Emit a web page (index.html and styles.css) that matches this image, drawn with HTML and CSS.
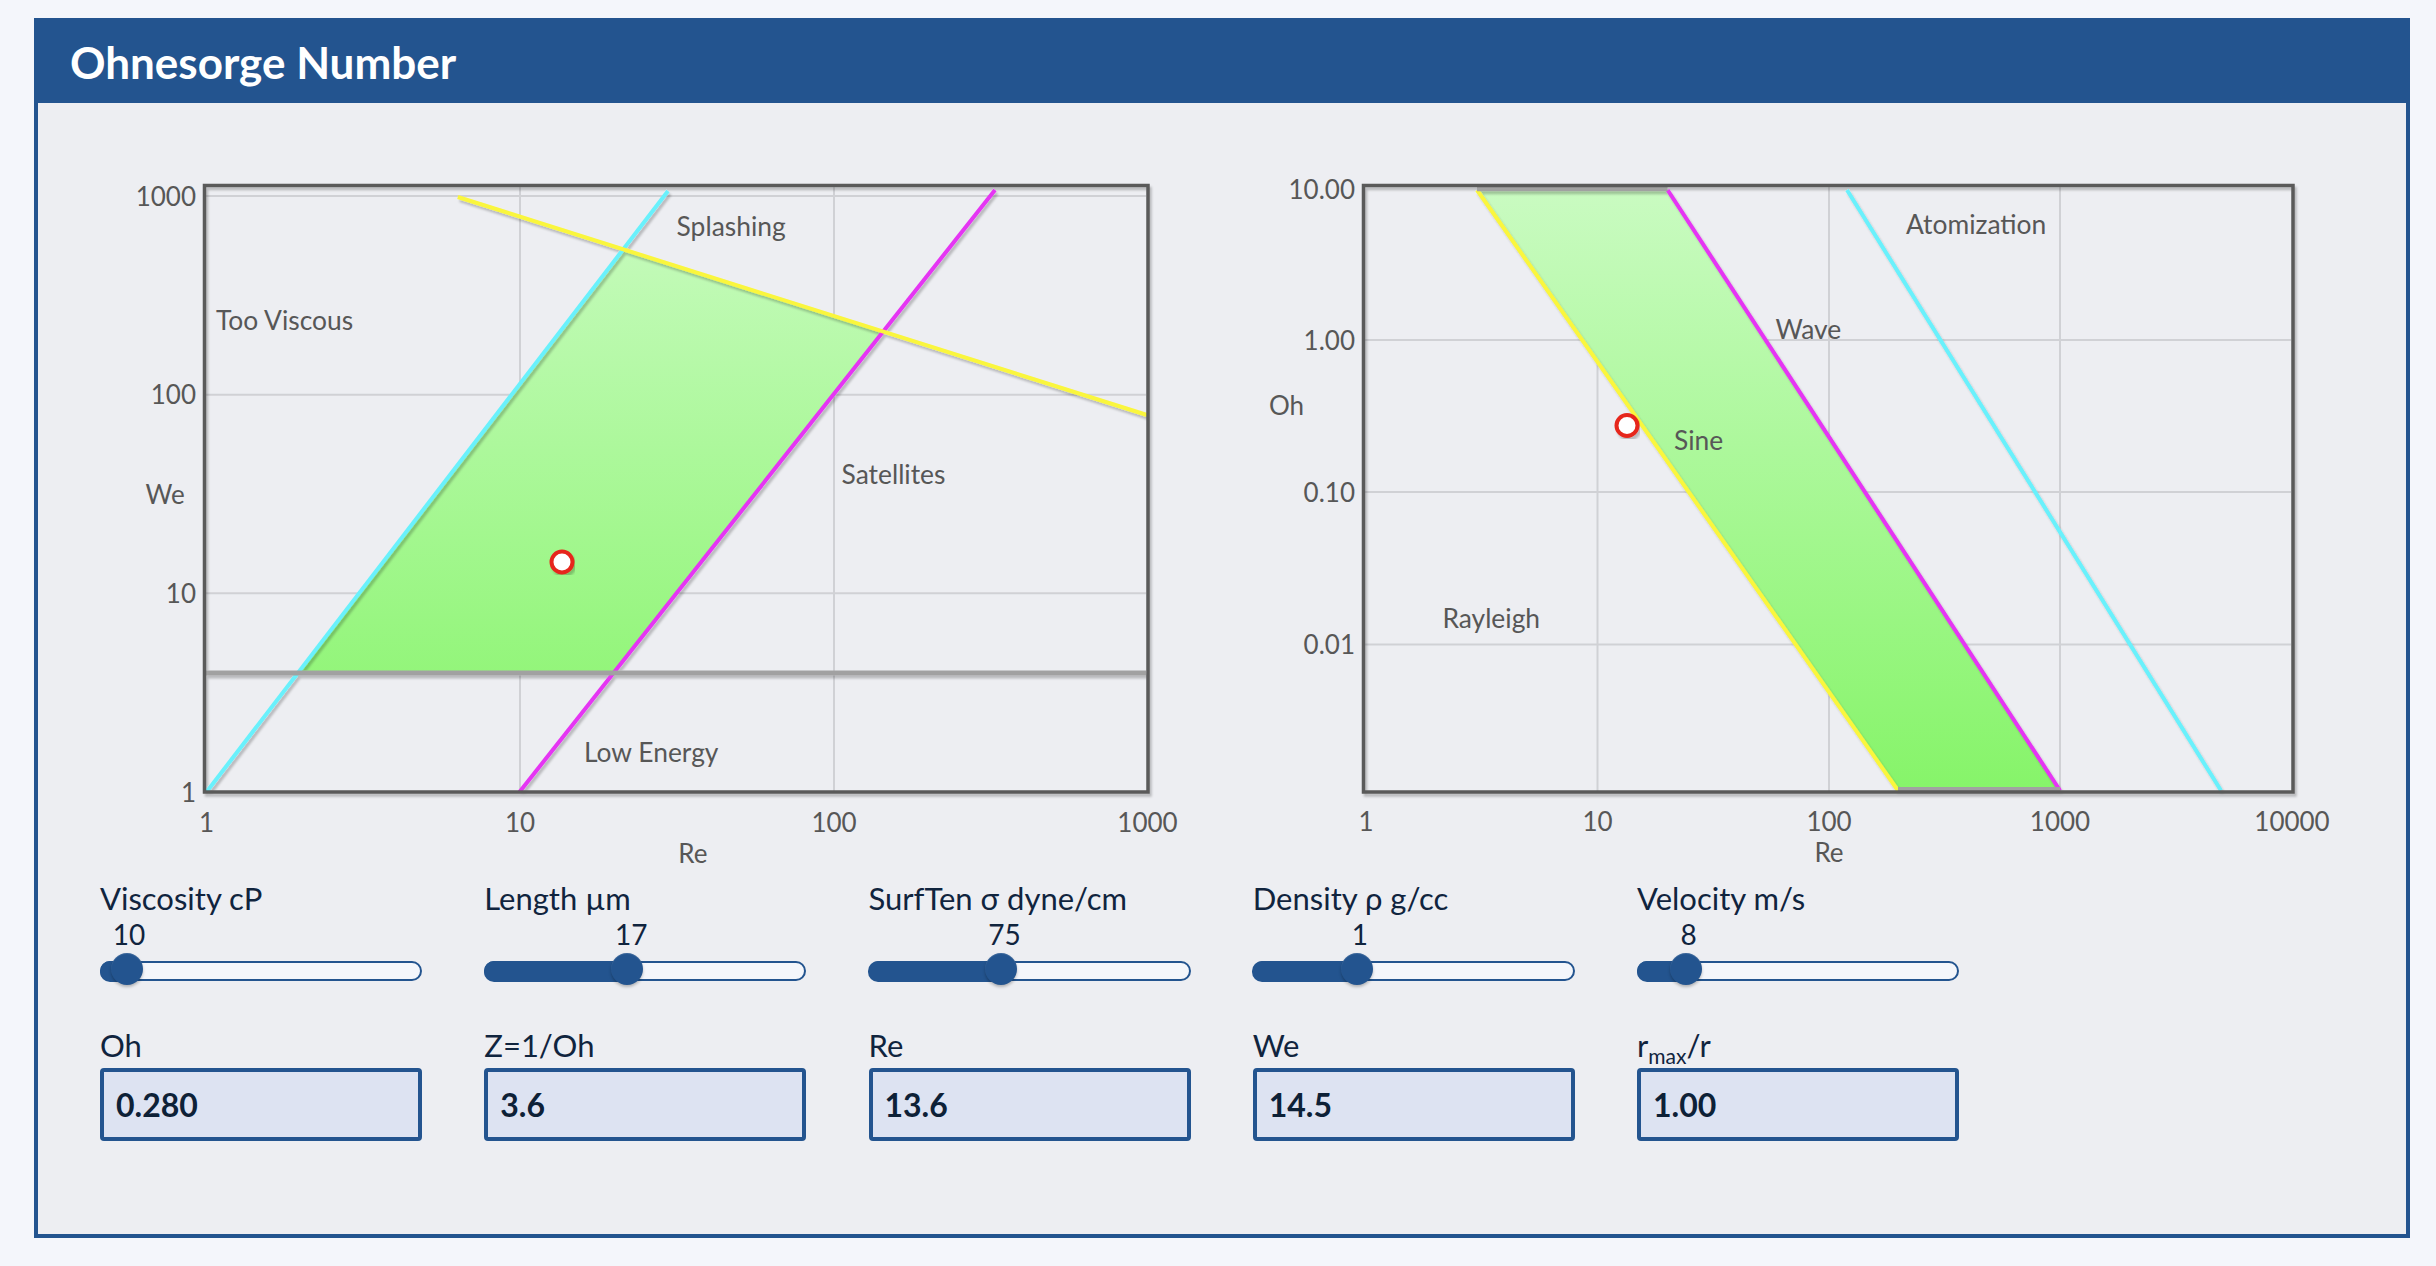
FILE: index.html
```html
<!DOCTYPE html>
<html lang="en">
<head>
<meta charset="utf-8">
<title>Ohnesorge Number</title>
<link rel="stylesheet" href="styles.css">
</head>
<body>
<section class="panel">
  <header class="panel-header">
    <h1 class="panel-title">Ohnesorge Number</h1>
  </header>
  <div class="panel-body">
    <div class="charts">
      <!-- Weber vs Reynolds regime map -->
      <svg class="chart chart-we" width="1100" height="730" viewBox="0 0 1100 730">
        <defs>
          <linearGradient id="band-a" gradientUnits="userSpaceOnUse" x1="0" y1="34" x2="0" y2="642">
            <stop offset="0" stop-color="#cafbc2"/>
            <stop offset="1" stop-color="#86f469"/>
          </linearGradient>
          <filter id="shade-a" x="-10%" y="-10%" width="120%" height="120%">
            <feDropShadow dx="2" dy="3" stdDeviation="1.2" flood-color="#000" flood-opacity="0.22"/>
          </filter>
        </defs>
        <g class="grid">
          <line x1="106" y1="46" x2="1046" y2="46"/>
          <line x1="106" y1="244.7" x2="1046" y2="244.7"/>
          <line x1="106" y1="443.3" x2="1046" y2="443.3"/>
          <line x1="420" y1="37" x2="420" y2="641"/>
          <line x1="734" y1="37" x2="734" y2="641"/>
        </g>
        <polygon class="band" fill="url(#band-a)" points="197.9,523 513.5,523 783.2,181.5 523.2,99.3"/>
        <g filter="url(#shade-a)">
          <line class="ln ln-cyan" x1="106.5" y1="642" x2="568" y2="41"/>
          <line class="ln ln-magenta" x1="419.5" y1="642" x2="895" y2="40"/>
          <line class="ln ln-yellow" x1="357.8" y1="47" x2="1047" y2="265"/>
          <line class="ln ln-gray" x1="106" y1="523" x2="1046" y2="523"/>
          <rect class="frame" x="104.5" y="35.5" width="943.5" height="606.5"/>
        </g>
        <circle class="marker" cx="462" cy="412" r="10.5" filter="url(#shade-a)"/>
        <g class="region-label">
          <text x="116" y="180">Too Viscous</text>
          <text x="576.6" y="86.3">Splashing</text>
          <text x="741.5" y="334">Satellites</text>
          <text x="484" y="612">Low Energy</text>
        </g>
        <g class="axis-label">
          <text x="45.6" y="353.5">We</text>
          <text x="592.8" y="713" text-anchor="middle">Re</text>
        </g>
        <g class="tick tick-y">
          <text x="96" y="55.5">1000</text>
          <text x="96" y="254.2">100</text>
          <text x="96" y="452.8">10</text>
          <text x="96" y="651.5">1</text>
        </g>
        <g class="tick tick-x">
          <text x="106.5" y="682">1</text>
          <text x="420" y="682">10</text>
          <text x="734" y="682">100</text>
          <text x="1047.5" y="682">1000</text>
        </g>
      </svg>

      <!-- Ohnesorge vs Reynolds jet breakup map -->
      <svg class="chart chart-oh" width="1150" height="730" viewBox="0 0 1150 730">
        <defs>
          <linearGradient id="band-b" gradientUnits="userSpaceOnUse" x1="0" y1="34" x2="0" y2="642">
            <stop offset="0" stop-color="#cafbc2"/>
            <stop offset="1" stop-color="#86f469"/>
          </linearGradient>
          <filter id="shade-b" x="-10%" y="-10%" width="120%" height="120%">
            <feDropShadow dx="2" dy="3" stdDeviation="1.2" flood-color="#000" flood-opacity="0.22"/>
          </filter>
        </defs>
        <g class="grid">
          <line x1="125" y1="190" x2="1051" y2="190"/>
          <line x1="125" y1="342" x2="1051" y2="342"/>
          <line x1="125" y1="494.5" x2="1051" y2="494.5"/>
          <line x1="357.5" y1="37" x2="357.5" y2="641"/>
          <line x1="589" y1="37" x2="589" y2="641"/>
          <line x1="820" y1="37" x2="820" y2="641"/>
        </g>
        <polygon class="band" fill="url(#band-b)" points="237,40 427.6,40 820,640.5 658,640.5"/>
        <g filter="url(#shade-b)">
          <line class="ln ln-yellow" x1="237" y1="40" x2="658" y2="640.5"/>
          <line class="ln ln-magenta" x1="427.6" y1="40" x2="820" y2="640.5"/>
          <line class="ln ln-cyan" x1="607" y1="40" x2="981" y2="640.5"/>
          <line class="ln ln-gray" x1="237" y1="38.7" x2="427.6" y2="38.7"/>
          <line class="ln ln-gray" x1="658" y1="639.6" x2="820" y2="639.6"/>
          <rect class="frame" x="123.5" y="35.5" width="929.5" height="606.5"/>
        </g>
        <circle class="marker" cx="387" cy="275.5" r="10.5" filter="url(#shade-b)"/>
        <g class="region-label">
          <text x="666" y="84">Atomization</text>
          <text x="535.4" y="189">Wave</text>
          <text x="434" y="300">Sine</text>
          <text x="202.4" y="477.5">Rayleigh</text>
        </g>
        <g class="axis-label">
          <text x="29" y="265">Oh</text>
          <text x="589" y="711.6" text-anchor="middle">Re</text>
        </g>
        <g class="tick tick-y">
          <text x="115" y="49">10.00</text>
          <text x="115" y="199.5">1.00</text>
          <text x="115" y="351.5">0.10</text>
          <text x="115" y="504">0.01</text>
        </g>
        <g class="tick tick-x">
          <text x="126" y="681">1</text>
          <text x="357.5" y="681">10</text>
          <text x="589" y="681">100</text>
          <text x="820" y="681">1000</text>
          <text x="1052" y="681">10000</text>
        </g>
      </svg>
    </div>

    <div class="controls">
      <div class="slider-field">
        <div class="field-label">Viscosity cP</div>
        <div class="slider-value"><span class="value-tag" style="left: 7.8%">10</span></div>
        <div class="slider-track">
          <div class="slider-fill" style="width: 7.8%"></div>
          <div class="slider-thumb" style="left: 7.8%"></div>
        </div>
      </div>
      <div class="slider-field">
        <div class="field-label">Length µm</div>
        <div class="slider-value"><span class="value-tag" style="left: 44.4%">17</span></div>
        <div class="slider-track">
          <div class="slider-fill" style="width: 44.4%"></div>
          <div class="slider-thumb" style="left: 44.4%"></div>
        </div>
      </div>
      <div class="slider-field">
        <div class="field-label">SurfTen σ dyne/cm</div>
        <div class="slider-value"><span class="value-tag" style="left: 41%">75</span></div>
        <div class="slider-track">
          <div class="slider-fill" style="width: 41%"></div>
          <div class="slider-thumb" style="left: 41%"></div>
        </div>
      </div>
      <div class="slider-field">
        <div class="field-label">Density ρ g/cc</div>
        <div class="slider-value"><span class="value-tag" style="left: 32%">1</span></div>
        <div class="slider-track">
          <div class="slider-fill" style="width: 32%"></div>
          <div class="slider-thumb" style="left: 32%"></div>
        </div>
      </div>
      <div class="slider-field">
        <div class="field-label">Velocity m/s</div>
        <div class="slider-value"><span class="value-tag" style="left: 14.8%">8</span></div>
        <div class="slider-track">
          <div class="slider-fill" style="width: 14.8%"></div>
          <div class="slider-thumb" style="left: 14.8%"></div>
        </div>
      </div>

      <div class="output-field">
        <div class="field-label">Oh</div>
        <div class="output-box">0.280</div>
      </div>
      <div class="output-field">
        <div class="field-label">Z=1/Oh</div>
        <div class="output-box">3.6</div>
      </div>
      <div class="output-field">
        <div class="field-label">Re</div>
        <div class="output-box">13.6</div>
      </div>
      <div class="output-field">
        <div class="field-label">We</div>
        <div class="output-box">14.5</div>
      </div>
      <div class="output-field">
        <div class="field-label">r<sub>max</sub>/r</div>
        <div class="output-box">1.00</div>
      </div>
    </div>
  </div>
</section>
</body>
</html>
```

FILE: styles.css
```css
* {
  box-sizing: border-box;
}

html, body {
  margin: 0;
  padding: 0;
}

body {
  background: #f4f6fb;
  font-family: Lato, "Open Sans", "Liberation Sans", sans-serif;
  padding: 18px 26px 0 34px;
}

.panel {
  border: 4px solid #23548f;
  background: #edeef2;
}

.panel-header {
  background: #23548f;
  height: 81px;
  padding-left: 32px;
}

.panel-title {
  margin: 0;
  color: #ffffff;
  font-size: 44px;
  font-weight: 700;
  line-height: 81px;
}

.panel-body {
  padding: 47px 0 93px 62px;
}

.charts {
  display: flex;
  gap: 40px;
  height: 730px;
}

.chart {
  display: block;
  flex: none;
}

.chart text {
  font-family: Lato, "Open Sans", "Liberation Sans", sans-serif;
  font-size: 26px;
  fill: #575757;
}

.region-label text {
  font-size: 26.4px;
}

.tick-y text {
  text-anchor: end;
}

.tick-x text {
  text-anchor: middle;
}

.grid line {
  stroke: #d0d1d5;
  stroke-width: 2;
}

.ln {
  stroke-width: 4;
  stroke-linecap: butt;
}

.ln-cyan { stroke: #69f1fc; }
.ln-magenta { stroke: #e534f3; }
.ln-yellow { stroke: #faf63e; }
.ln-gray { stroke: #a1a1a1; stroke-width: 5; }

.frame {
  fill: none;
  stroke: #5a5a5a;
  stroke-width: 3.5;
}

.marker {
  fill: #ffffff;
  stroke: #e6271b;
  stroke-width: 4;
}

.controls {
  display: grid;
  grid-template-columns: repeat(5, 322px);
  column-gap: 62.25px;
  row-gap: 48px;
  margin-top: 2px;
  color: #10243e;
}

.field-label {
  font-size: 31px;
  line-height: 32px;
  white-space: nowrap;
}

.field-label sub {
  font-size: 21px;
  line-height: 0;
  vertical-align: -7px;
}

/* number shown above the slider thumb */
.slider-value {
  position: relative;
  height: 36px;
  font-size: 28px;
  line-height: 32px;
}

.value-tag {
  position: absolute;
  top: 4px;
  transform: translateX(calc(-50% + 4px));
}

.slider-track {
  position: relative;
  margin-top: 11px;
  height: 20px;
  border: 2.5px solid #23548f;
  border-radius: 10px;
  background: #f4f6fb;
}

.slider-fill {
  position: absolute;
  left: -2.5px;
  top: -2.5px;
  bottom: -2.5px;
  background: #23548f;
  border-radius: 10px 0 0 10px;
}

.slider-thumb {
  position: absolute;
  top: -10.5px;
  width: 32px;
  height: 32px;
  margin-left: -16px;
  border-radius: 50%;
  background: #23548f;
  box-shadow: 0 2px 3px rgba(0, 0, 0, 0.25), inset 0 1px 1px rgba(255, 255, 255, 0.12);
}

.output-field .field-label {
  margin-bottom: 7px;
}

.output-box {
  height: 73px;
  border: 4px solid #23548f;
  border-radius: 4px;
  background: #dde3f2;
  padding-left: 12px;
  font-size: 32px;
  font-weight: 700;
  line-height: 65px;
  color: #0d2137;
}
```
